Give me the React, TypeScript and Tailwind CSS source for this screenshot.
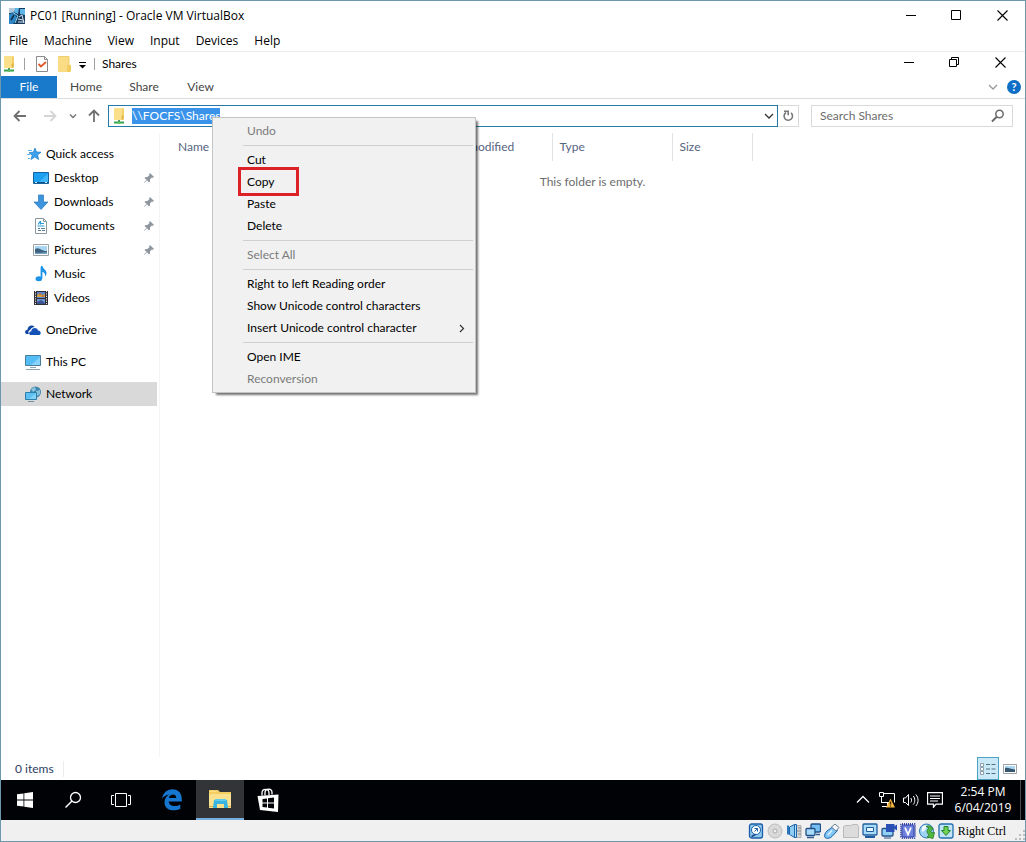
import type { ReactNode } from "react"

type IconProps = { className?: string }

const Svg = ({ size = 16, children, className = "" }: { size?: number; children: ReactNode; className?: string }) => (
	<svg width={size} height={size} viewBox={`0 0 ${size} ${size}`} fill="none" className={`shrink-0 ${className}`}>
		{children}
	</svg>
)

const MinimizeIcon = () => (
	<Svg size={11}>
		<path d="M0 5.5h10" stroke="#000" />
	</Svg>
)

const MaximizeIcon = () => (
	<Svg size={11}>
		<path d="M.5 .5h9v9h-9z" stroke="#000" />
	</Svg>
)

const RestoreIcon = () => (
	<Svg size={11}>
		<path d="M.5 2.5h7v7h-7zM2.5 2V.5h7v7H8" stroke="#000" />
	</Svg>
)

const CloseIcon = () => (
	<Svg size={11}>
		<path d="M.5 .5l10 10M10.5 .5l-10 10" stroke="#000" strokeWidth="1.1" />
	</Svg>
)

const VirtualBoxIcon = () => (
	<Svg>
		<path d="M0 0h16v16H0z" fill="#173a5c" />
		<path d="M0 0h6v3L2 5H0z" fill="#b9c8d6" />
		<path d="M6 0h4L9 6 5 4zM11 1h5v6l-5-1z" fill="#5db4e8" />
		<path d="M0 6l5-1 3 5-4 6H0z" fill="#2f86c6" />
		<path d="M1 2l8 6-3 7" stroke="#8ed2f7" />
		<path d="M10 9l3-2 2 8M9 14h6M9 11l5 1" stroke="#d9e8f3" />
		<path d="M2 12l3-5" stroke="#112c48" strokeWidth="1.5" />
	</Svg>
)

const NetworkFolderIcon = ({ className }: IconProps) => (
	<Svg className={className}>
		<path d="M3 0h9l1 1v10l-1 1H3z" fill="#f3cf68" />
		<path d="M3 0h8v12H3z" fill="#fbe08c" />
		<path d="M10.5 8l2-1v4l-2 1z" fill="#e5b644" />
		<path d="M8 12v2" stroke="#5a9a62" strokeWidth="2" />
		<path d="M3 14.5h10" stroke="#35a447" strokeWidth="2" />
		<path d="M6.5 15h3" stroke="#67c26f" strokeWidth="2" />
	</Svg>
)

const PropertiesIcon = () => (
	<Svg>
		<path d="M2.5 .5h8l3 3v12h-11z" fill="#fff" stroke="#8b8b8b" />
		<path d="M10.5 .5v3h3" stroke="#8b8b8b" />
		<path d="M4.5 8l2.5 2.5 5-4.5" stroke="#e2582c" strokeWidth="1.8" />
	</Svg>
)

const FolderIcon = () => (
	<Svg>
		<path d="M2 0h11v10l2 1v4l-1 1H2z" fill="#f9dc84" />
		<path d="M11 10l1-1h3v6l-1 1h-3z" fill="#f3cc60" />
		<path d="M2.5 .5h10.500v9" stroke="#efcd6e" />
	</Svg>
)

const ChevronDown = ({ className = "text-[#666]" }: IconProps) => (
	<Svg size={10} className={className}>
		<path d="M1 3l4 4 4-4" stroke="currentColor" strokeWidth="1.3" />
	</Svg>
)

const ArrowIcon = ({ className }: IconProps) => (
	<Svg className={className}>
		<path d="M14 8H3M7.5 3L2.5 8l5 5" stroke="currentColor" strokeWidth="1.8" />
	</Svg>
)

const PinIcon = () => (
	<Svg size={10}>
		<path d="M6 0l4 4-1 .8L7.800 4.500 6 6.500 6 8.500 5 9.500 3 7.200 0 10l-.2-.3L2.600 6.800.5 5l1-1h2l2-2L5.200 1z" fill="#8d959d" />
	</Svg>
)

const StarIcon = () => (
	<Svg>
		<path d="M9 2l1.500 4 4.500.2-3.500 2.800 1.200 4.500L8.800 11 5 13.500l1.200-4.300L3 6.700l4.300-.5z" fill="#3ba1ea" stroke="#1d7cc9" strokeWidth=".7" />
		<path d="M2 4.500h4M1 8.500h3M2 12.500h2" stroke="#5bb4f0" />
	</Svg>
)

const DesktopIcon = () => (
	<Svg>
		<path d="M.5 2.500h15v11H.5z" fill="#1ba0f2" stroke="#14639f" />
		<path d="M6 12L15 4v8z" fill="#43b6fa" />
		<path d="M1 12.500h14" stroke="#0b4f88" />
		<path d="M2 12.500h2M12 12.500h2" stroke="#d6efff" />
	</Svg>
)

const DownloadsIcon = () => (
	<Svg>
		<path d="M5.5 1h5v7H15L8 15.500 1 8h4.500z" fill="#3b94dc" stroke="#2878bd" strokeWidth=".7" />
	</Svg>
)

const DocumentsIcon = () => (
	<Svg>
		<path d="M2.5 .5h8l3 3v12h-11z" fill="#fff" stroke="#8c969d" />
		<path d="M10.5 .5v3h3" stroke="#8c969d" />
		<path d="M7.5 3L5 6.500M8 5.500h3M4.500 8h7M7.500 3v3.500" stroke="#2a9bd8" strokeWidth="1.2" />
		<path d="M5 10.500h2M8 10.500h4M5 12.500h3M9 12.500h3" stroke="#5b7b8e" />
	</Svg>
)

const PicturesIcon = () => (
	<Svg>
		<path d="M.5 2.500h15v11H.5z" fill="#fff" stroke="#9aa1a6" />
		<path d="M2 4h12v8H2z" fill="#a9d6f2" />
		<path d="M2 7c3-2 5 0 7 1s4 1 5 1v3H2z" fill="#3c607e" />
		<path d="M2 10.500c4 1 8-.5 12-.5v2H2z" fill="#6fa0bf" />
	</Svg>
)

const MusicIcon = () => (
	<Svg>
		<path d="M8.500 1v11.500" stroke="#1c93e6" strokeWidth="1.8" />
		<ellipse cx="5.800" cy="12.800" rx="3.300" ry="2.500" fill="#1c93e6" />
		<path d="M8 0h1.500c.5 3 4 4 4 7 0 1.500-.7 2.700-1.500 3.500.5-3-1-4.500-4-5z" fill="#1c93e6" />
	</Svg>
)

const VideosIcon = () => (
	<Svg>
		<path d="M1 1h14v14H1z" fill="#2f2f35" />
		<path d="M2.500 1v14M13.500 1v14" stroke="#e8e8e8" strokeDasharray="1.200 1.200" />
		<path d="M4 2h8v6H4z" fill="#5d86cf" />
		<path d="M4 9h8v5H4z" fill="#6d92d6" />
		<path d="M4 5l3-2 2 2 3-1v3H4z" fill="#d0a23e" />
		<path d="M6 4h2M9 6h2" stroke="#b8453c" />
		<path d="M4 12l4-2 4 3v1H4z" fill="#3b5593" />
	</Svg>
)

const OneDriveIcon = () => (
	<Svg>
		<path d="M1.500 12C-.5 11.500-.5 8 2.500 7.700 2.500 4 7 2 9.500 5c-3 .2-4 2-4.300 3C3 8.500 3 11 4 12z" fill="#1045a1" />
		<path d="M6 13c-2.500 0-2.500-3.700.3-3.800C6.500 5.500 12 4.800 13 8.500c3.500.2 3.500 4.500.5 4.500z" fill="#1552b8" />
	</Svg>
)

const ThisPcIcon = () => (
	<Svg>
		<path d="M.5 1.500h15v10H.5z" fill="#54bdf5" stroke="#4b7d99" />
		<path d="M6 11L15 3v8z" fill="#86d3fb" />
		<path d="M5 13.500h6M1 15.500h14" stroke="#8ba5b3" />
	</Svg>
)

const NetworkIcon = () => (
	<Svg>
		<circle cx="10.500" cy="6" r="5.500" fill="#3f84ab" />
		<path d="M6 3l4-2 1 3-3 2zM11 5l4-1v4l-3 2z" fill="#8cc3de" />
		<path d="M.5 6.500h11v7H.5z" fill="#5cc0f2" stroke="#2d7fa9" />
		<path d="M4 13l7-6v6z" fill="#83d2f8" />
		<path d="M3 15.500h6" stroke="#6e93a6" />
	</Svg>
)

const SearchIcon = () => (
	<Svg size={14}>
		<circle cx="8.500" cy="5" r="3.700" stroke="#6a6a6a" strokeWidth="1.5" />
		<path d="M6 7.500L1 12.500" stroke="#6a6a6a" strokeWidth="2" />
	</Svg>
)

const quickAccess = [
	{ label: "Desktop", icon: <DesktopIcon />, pinned: true },
	{ label: "Downloads", icon: <DownloadsIcon />, pinned: true },
	{ label: "Documents", icon: <DocumentsIcon />, pinned: true },
	{ label: "Pictures", icon: <PicturesIcon />, pinned: true },
	{ label: "Music", icon: <MusicIcon />, pinned: false },
	{ label: "Videos", icon: <VideosIcon />, pinned: false },
]

const places = [
	{ label: "OneDrive", icon: <OneDriveIcon />, active: false },
	{ label: "This PC", icon: <ThisPcIcon />, active: false },
	{ label: "Network", icon: <NetworkIcon />, active: true },
]

const menuGroups = [
	[{ label: "Undo", disabled: true }],
	[{ label: "Cut" }, { label: "Copy", marked: true }, { label: "Paste" }, { label: "Delete" }],
	[{ label: "Select All", disabled: true }],
	[
		{ label: "Right to left Reading order" },
		{ label: "Show Unicode control characters" },
		{ label: "Insert Unicode control character", submenu: true },
	],
	[{ label: "Open IME" }, { label: "Reconversion", disabled: true }],
] as { label: string; disabled?: boolean; marked?: boolean; submenu?: boolean }[][]

const WindowButtons = ({ restored }: { restored?: boolean }) => (
	<div className="ml-auto flex h-full">
		<button aria-label="Minimize" className="flex w-[46px] items-center justify-center">
			<MinimizeIcon />
		</button>
		<button aria-label={restored ? "Restore" : "Maximize"} className="flex w-[45px] items-center justify-center">
			{restored ? <RestoreIcon /> : <MaximizeIcon />}
		</button>
		<button aria-label="Close" className="flex w-[46px] items-center justify-center">
			<CloseIcon />
		</button>
	</div>
)

const ContextMenu = () => (
	<div
		role="menu"
		className="absolute top-[116px] left-[211px] w-[264px] border border-[#c4c4c4] bg-[#f1f1f1] p-[2px] shadow-[3px_3px_2px_-1px_rgba(0,0,0,0.55)]">
		{menuGroups.map((group, i) => (
			<div key={i}>
				{i > 0 && <div className="my-[3px] ml-7 h-px bg-[#d0d0d0]" />}
				{group.map((item) => (
					<button
						key={item.label}
						role="menuitem"
						disabled={item.disabled}
						className={`relative flex h-[22px] w-full items-center pr-[6px] pl-8 text-left ${item.disabled ? "text-[#7b7b7b]" : "text-black"}`}>
						{item.label}
						{item.submenu && (
							<Svg size={10} className="ml-auto">
								<path d="M3 2l3.500 3.500L3 9" stroke="#333" strokeWidth="1.200" />
							</Svg>
						)}
						{item.marked && (
							<span className="absolute -top-1 left-[23px] h-[29px] w-[61px] border-3 border-[#dc2127]" />
						)}
					</button>
				))}
			</div>
		))}
	</div>
)

const Ribbon = () => (
	<>
		<div className="flex h-6 items-center">
			<NetworkFolderIcon />
			<div className="ml-[7px] h-3 w-px bg-[#a0a0a0]" />
			<div className="ml-[9px] flex items-center gap-[6px]">
				<button aria-label="Properties">
					<PropertiesIcon />
				</button>
				<button aria-label="New folder">
					<FolderIcon />
				</button>
				<button aria-label="Customize Quick Access Toolbar">
					<Svg size={9}>
						<path d="M1 2.500h7" stroke="#000" />
						<path d="M1 5h7L4.500 8.500z" fill="#000" />
					</Svg>
				</button>
			</div>
			<div className="ml-[7px] h-3 w-px bg-[#a0a0a0]" />
			<span className="ml-[7px] text-black">Shares</span>
			<div className="mr-[2px] ml-auto h-5 self-start">
				<WindowButtons restored />
			</div>
		</div>
		<div className="flex h-[23px] items-stretch border-b border-[#dadbdc] text-[#444]">
			<button className="w-14 bg-[#1979ca] text-white">File</button>
			<button className="w-[58px]">Home</button>
			<button className="w-[58px]">Share</button>
			<button className="w-[55px]">View</button>
			<div className="mr-1 ml-auto flex items-center gap-[9px]">
				<button aria-label="Expand the Ribbon">
					<ChevronDown className="text-[#999]" />
				</button>
				<button
					aria-label="Help"
					className="flex size-[14px] items-center justify-center rounded-full bg-[#0f6fc6] text-[11px] font-bold text-white">
					?
				</button>
			</div>
		</div>
	</>
)

const AddressRow = () => (
	<div className="flex h-[34px] items-center pr-3 pl-[11px]">
		<button aria-label="Back">
			<ArrowIcon className="text-[#6f6f6f]" />
		</button>
		<button aria-label="Forward" className="ml-[14px]">
			<ArrowIcon className="rotate-180 text-[#d5d5d5]" />
		</button>
		<button aria-label="Recent locations" className="ml-[10px]">
			<Svg size={10} className="text-[#777]">
				<path d="M2 3.500l3 3 3-3" stroke="currentColor" strokeWidth="1.5" />
			</Svg>
		</button>
		<button aria-label="Up" className="ml-2">
			<ArrowIcon className="rotate-90 text-[#6f6f6f]" />
		</button>
		<div className="ml-[6px] flex h-[22px] min-w-0 flex-1 items-center border border-[#2479a9] pr-[3px] pl-[2px]">
			<NetworkFolderIcon />
			<input
				aria-label="Address"
				defaultValue="\\FOCFS\Shares"
				className="ml-[5px] field-sizing-content h-4 bg-[#3a93ea] text-white outline-none"
			/>
			<button aria-label="Previous locations" className="ml-auto">
				<ChevronDown className="text-[#333]" />
			</button>
		</div>
		<button
			aria-label="Refresh"
			className="flex h-[22px] w-[21px] items-center justify-center border border-l-0 border-[#d9d9d9]">
			<Svg size={12}>
				<path d="M9 2.800a4.200 4.200 0 1 1-5-.3" stroke="#777" strokeWidth="1.6" />
				<path d="M2 1.200h4.200v4" stroke="#777" strokeWidth="1.6" />
			</Svg>
		</button>
		<label className="ml-3 flex h-[22px] w-[202px] items-center border border-[#d9d9d9] pr-[7px] pl-2">
			<input
				type="search"
				aria-label="Search Shares"
				placeholder="Search Shares"
				className="min-w-0 flex-1 outline-none placeholder:text-[#6d6d6d]"
			/>
			<SearchIcon />
		</label>
	</div>
)

const Sidebar = () => (
	<nav className="w-[159px] shrink-0 border-r border-[#f4f4f4] pt-[9px] text-black">
		<a href="#quick" className="flex h-6 items-center gap-1 pl-[25px]">
			<StarIcon />
			Quick access
		</a>
		{quickAccess.map(({ label, icon, pinned }) => (
			<a key={label} href="#folder" className="flex h-6 items-center gap-[5px] pr-[5px] pl-8">
				{icon}
				{label}
				{pinned && (
					<span className="ml-auto">
						<PinIcon />
					</span>
				)}
			</a>
		))}
		{places.map(({ label, icon, active }) => (
			<a
				key={label}
				href="#place"
				className={`mt-2 mr-[2px] flex h-6 items-center gap-[5px] pl-6 ${active ? "bg-[#d9d9d9]" : ""}`}>
				{icon}
				{label}
			</a>
		))}
	</nav>
)

const FileList = () => (
	<main className="min-w-0 flex-1">
		<table className="table-fixed text-left text-[#55647f]">
			<thead>
				<tr className="h-7">
					<th className="w-[272px] border-r border-[#e2e2e2] pl-[18px] font-normal">Name</th>
					<th className="w-[120px] border-r border-[#e2e2e2] pl-[7px] font-normal">Date modified</th>
					<th className="w-[120px] border-r border-[#e2e2e2] pl-[7px] font-normal">Type</th>
					<th className="w-20 border-r border-[#e2e2e2] pl-[7px] font-normal">Size</th>
				</tr>
			</thead>
		</table>
		<p className="pt-[13px] text-center text-[#6d6d6d]">This folder is empty.</p>
	</main>
)

const Taskbar = () => (
	<div className="flex h-10 shrink-0 items-stretch bg-[#010206] text-white">
		<button aria-label="Start" className="flex w-12 items-center justify-center">
			<Svg>
				<path d="M0 2.300L6.500 1.400v6.200H0zM7.300 1.300L16 0v7.600H7.300zM0 8.400h6.500v6.200L0 13.700zM7.300 8.400H16V16l-8.700-1.300z" fill="#fff" />
			</Svg>
		</button>
		<button aria-label="Search" className="flex w-12 items-center justify-center">
			<Svg size={18}>
				<circle cx="11.500" cy="6.500" r="5" stroke="#fff" strokeWidth="1.3" />
				<path d="M8 10L1.500 16.500" stroke="#fff" strokeWidth="1.5" />
			</Svg>
		</button>
		<button aria-label="Task View" className="flex w-12 items-center justify-center">
			<Svg size={20}>
				<path d="M4.500 3.500h11v13h-11zM3 5.500H.5v9H3M17 5.500h2.500v9H17" stroke="#fff" />
			</Svg>
		</button>
		<button aria-label="Microsoft Edge" className="ml-[3px] flex w-12 items-center justify-center">
			<Svg size={22}>
				<path
					d="M1 9.800C2 4 6 .3 11.500.3c6 0 9.300 4.400 9.300 9.600v2.500H7.700c.2 4.700 7.200 5.800 11.600 3v4.400C12.500 23 3.500 21.200 3.500 13.400c0-3.700 2-6.300 5-7.800C4.800 6 2.500 7.600 1 9.800zM7.800 9h7.500c.1-4.700-6.400-4.700-7.500 0z"
					fill="#1577d0"
				/>
			</Svg>
		</button>
		<button
			aria-label="File Explorer"
			className="flex w-12 items-center justify-center border-b-2 border-[#76b0e0] bg-[#333437]">
			<Svg size={22}>
				<path d="M0 2h9l2 2h11v16H0z" fill="#f3cd62" />
				<path d="M1 3h7v1H1zM0 6h22v14H0z" fill="#fbe08d" />
				<path d="M5 12h13l1 8h-4v-4H8v4H4z" fill="#37b5e0" />
				<path d="M6 11h11v2H6z" fill="#5ccbed" />
				<path d="M0 18.500h4M19 18.500h3" stroke="#dcae47" />
			</Svg>
		</button>
		<button aria-label="Store" className="flex w-12 items-center justify-center">
			<Svg size={24}>
				<path d="M1.500 8L22.500 6.500 22 24 4 22z" fill="#fff" />
				<path d="M6 7.500V5C6 .2 13 .2 13 5v2M9 7.500V4.500c0-4.500 7-4.500 7 0v2" stroke="#fff" strokeWidth="1.3" />
				<path d="M6.500 11l4.500-.6v4H6.500zM12 10.200l6-.8v5h-6zM6.500 15.400H11v4l-4.500-.5zM12 15.400h6v5l-6-.7z" fill="#010206" />
			</Svg>
		</button>
		<div className="ml-auto flex items-center gap-2">
			<Svg>
				<path d="M2 10.500L8 4.500l6 6" stroke="#fff" strokeWidth="1.3" />
			</Svg>
			<Svg>
				<path d="M4.500 1.500h11v9M2 10.500h8M8.500 11v3M3 14.500h6" stroke="#fff" />
				<path d="M.5 .5h4v4h-4z" fill="#010206" stroke="#fff" />
				<path d="M2.500 4.500v6" stroke="#fff" />
				<path d="M11.500 6.500L16 15.500H7z" fill="#f3b33f" />
				<path d="M11.500 9.500v3M11.500 13.500v1" stroke="#3a2800" strokeWidth="1.3" />
			</Svg>
			<Svg>
				<path d="M.5 6v4.500h2l3 3v-11l-3 3.500z" stroke="#fff" />
				<path d="M7.800 6c1 1.300 1 3 0 4.500M10.300 4c2 2.500 2 6 0 8.500M12.800 2.500c3 3.500 3 8 0 11.500" stroke="#fff" />
			</Svg>
			<Svg>
				<path d="M.5 .7h15v11.500H9l-2.500 3v-3h-6z" stroke="#fff" strokeWidth="1.3" />
				<path d="M3 4h10M3 6.500h10M3 9h8" stroke="#fff" />
			</Svg>
		</div>
		<div className="flex w-[77px] flex-col items-center justify-center pr-px pb-px pl-1 font-['Open_Sans',sans-serif]">
			<span>2:54 PM</span>
			<span>6/04/2019</span>
		</div>
		<div className="w-[5px] border-l border-[#4a4b4e]" />
	</div>
)

const HardDiskIcon = () => (
	<Svg>
		<rect x="1.500" y="1" width="13" height="14" rx="2" fill="#8cc8ee" stroke="#1b5da8" strokeWidth="1.3" />
		<circle cx="8" cy="7" r="4.500" fill="#fff" stroke="#1c62ab" />
		<path d="M6.500 8.500l3-3M6.500 5.500h3v3" stroke="#1c62ab" />
		<path d="M3.500 13.500l4-2" stroke="#17467f" strokeWidth="1.5" />
	</Svg>
)

const DiscIcon = () => (
	<Svg>
		<circle cx="8" cy="8" r="7" fill="#d9d9d9" stroke="#bcbcbc" />
		<circle cx="8" cy="8" r="2" fill="#f0f0f0" stroke="#aaa" />
	</Svg>
)

const AudioIcon = () => (
	<Svg>
		<path d="M10 2.500h5v12h-5z" fill="#d4d4d4" stroke="#b0b0b0" />
		<path d="M12 5h3M11 8h4M12 11h3" stroke="#8a8a8a" />
		<path d="M1 2.500h2v9H1z" fill="#2a78bd" />
		<path d="M3.500 4l5-2.500v13l-5-3z" fill="#8fcdf5" stroke="#1d66ad" />
		<path d="M8.500 1.500h2v13h-2z" fill="#b5e0f9" stroke="#1d66ad" />
	</Svg>
)

const VmNetworkIcon = () => (
	<Svg>
		<rect x="6" y="1" width="9.500" height="8" rx="1" fill="#74c0f0" stroke="#214f86" strokeWidth="1.3" />
		<path d="M11 11.500h4" stroke="#2f5e93" strokeWidth="1.5" />
		<rect x="1" y="5.500" width="9" height="7" rx="1" fill="#a6dbfa" stroke="#214f86" strokeWidth="1.3" />
		<path d="M2 14.500h7" stroke="#2f5e93" strokeWidth="1.5" />
	</Svg>
)

const UsbIcon = () => (
	<Svg>
		<path d="M9 3.500l4.500 4-5.500 6c-2 2-5.500 2.500-7 1-1-2 0-5 2-6.500z" fill="#7fc6f4" stroke="#1d62aa" />
		<path d="M11 1l4 3.500-3 3.500-4.500-4z" fill="#f3f6f8" stroke="#6e7f90" />
		<path d="M4 12l4-4.500" stroke="#dff2fd" strokeWidth="1.5" />
	</Svg>
)

const SharedFolderIcon = () => (
	<Svg>
		<path d="M.5 14.500V3.500l2-1h5l2-1h5l1 2v11z" fill="#dcdcdc" stroke="#bababa" />
	</Svg>
)

const DisplayIcon = () => (
	<Svg>
		<rect x="1" y="1" width="14" height="11" rx="1" fill="#a9dcf9" stroke="#1f5c9f" strokeWidth="1.3" />
		<path d="M4.500 4.500h7v4h-7z" fill="#e9f7ff" stroke="#1f5c9f" />
		<path d="M3 14h10" stroke="#1f5c9f" strokeWidth="2" />
	</Svg>
)

const RecordingIcon = () => (
	<Svg>
		<rect x="1" y="5.500" width="11" height="7.500" rx="1" fill="#8fd0f6" stroke="#25508a" strokeWidth="1.3" />
		<path d="M5 1h8.500v8H5z" fill="#2b50b5" />
		<path d="M13 3.500l3-2v6l-3-2z" fill="#2b50b5" />
		<path d="M3 15h7" stroke="#25508a" />
	</Svg>
)

const CpuIcon = () => (
	<Svg>
		<rect x="1" y="1" width="14" height="14" rx="1" stroke="#3948ad" strokeWidth="2" strokeDasharray="1 1" />
		<rect x="2" y="2" width="12" height="12" rx="1" fill="#6f82de" stroke="#2f3fa3" />
		<path d="M5 4.500L8 11.500l3-7" stroke="#fff" strokeWidth="1.8" />
	</Svg>
)

const MouseIcon = () => (
	<Svg>
		<circle cx="7.500" cy="8" r="7" fill="#9ed3f3" stroke="#2c77ae" />
		<path d="M3 4c2-2 4-2 5-1L6 7 3 9z" fill="#f3fafe" />
		<path d="M7 3.500c3-1.500 6 0 7 2.500l-2.500 2 1.500 2 2.500-.5-1.500 6-6-1.500 2-1.500-2-3.500c0-2 .5-3 2-4z" fill="#53b83f" stroke="#227c25" strokeWidth=".8" />
	</Svg>
)

const KeyboardIcon = () => (
	<Svg>
		<rect x="1" y="1" width="14" height="14" rx="2" fill="#c2e4f6" stroke="#2170ae" strokeWidth="1.3" />
		<path d="M6 3.500h4v4h2.500L8 12.500 3.500 7.500H6z" fill="#6fd052" stroke="#1f8428" />
	</Svg>
)

const vmIndicators = [
	{ label: "Hard disks", icon: <HardDiskIcon /> },
	{ label: "Optical drives", icon: <DiscIcon /> },
	{ label: "Audio", icon: <AudioIcon /> },
	{ label: "Network", icon: <VmNetworkIcon /> },
	{ label: "USB", icon: <UsbIcon /> },
	{ label: "Shared folders", icon: <SharedFolderIcon /> },
	{ label: "Display", icon: <DisplayIcon /> },
	{ label: "Recording", icon: <RecordingIcon /> },
	{ label: "CPU", icon: <CpuIcon /> },
	{ label: "Mouse integration", icon: <MouseIcon /> },
	{ label: "Keyboard", icon: <KeyboardIcon /> },
]

const VmStatusBar = () => (
	<div className="flex h-[21px] shrink-0 items-center justify-end bg-[#f0f0f0] font-['Liberation_Serif',serif] text-[12px] text-black">
		<div className="flex gap-[3px]">
			{vmIndicators.map(({ label, icon }) => (
				<button key={label} aria-label={label}>
					{icon}
				</button>
			))}
		</div>
		<span className="ml-1">Right Ctrl</span>
		<Svg size={10} className="mt-2 ml-[9px]">
			<path d="M8 0h2v2H8zM8 4h2v2H8zM4 4h2v2H4zM8 8h2v2H8zM4 8h2v2H4zM0 8h2v2H0z" fill="#bdbdbd" />
		</Svg>
	</div>
)

const App = () => (
	<div className="relative flex h-screen flex-col overflow-hidden border border-[#6c98ad] bg-white font-['Lato','Open_Sans',sans-serif] text-[12px] leading-4">
		<header className="flex h-[29px] shrink-0 items-center pl-2 font-['Open_Sans',sans-serif] text-black">
			<VirtualBoxIcon />
			<h1 className="ml-[5px]">PC01 [Running] - Oracle VM VirtualBox</h1>
			<WindowButtons />
		</header>
		<div className="flex h-[22px] shrink-0 items-center gap-4 border-b border-[#ececec] pl-2 font-['Open_Sans',sans-serif] text-black">
			{["File", "Machine", "View", "Input", "Devices", "Help"].map((label) => (
				<button key={label}>{label}</button>
			))}
		</div>
		<Ribbon />
		<AddressRow />
		<div className="flex min-h-0 flex-1">
			<Sidebar />
			<FileList />
		</div>
		<div className="flex h-[23px] shrink-0 items-center pr-2 pl-[14px] text-[#2b3c63]">
			<span>0 items</span>
			<span className="ml-[9px] h-4 w-px bg-[#ececec]" />
			<div className="ml-auto flex items-center gap-1">
				<button
					aria-label="Details view"
					className="flex h-[23px] w-[22px] items-center justify-center border border-[#4ba3c3] bg-[#cbe8f6]">
					<Svg>
						<path d="M.5 2.500h3v3h-3zM.5 6.500h3v3h-3zM.5 10.500h3v3h-3z" fill="#fff" stroke="#8ba0ab" />
						<path d="M6 3.500h4M11.500 3.500h4M6 8h4M11.500 8h4M6 12.500h4M11.500 12.500h4" stroke="#4d7186" />
					</Svg>
				</button>
				<button aria-label="Large icons view">
					<Svg size={14}>
						<path d="M.5 2.500h13v9H.5z" fill="#fff" stroke="#9aa1a6" />
						<path d="M2 4h10v6H2z" fill="#a9d6f2" />
						<path d="M2 6c3-1 5 1 10 1.500V10H2z" fill="#35566e" />
					</Svg>
				</button>
			</div>
		</div>
		<Taskbar />
		<VmStatusBar />
		<ContextMenu />
	</div>
)

export default App
